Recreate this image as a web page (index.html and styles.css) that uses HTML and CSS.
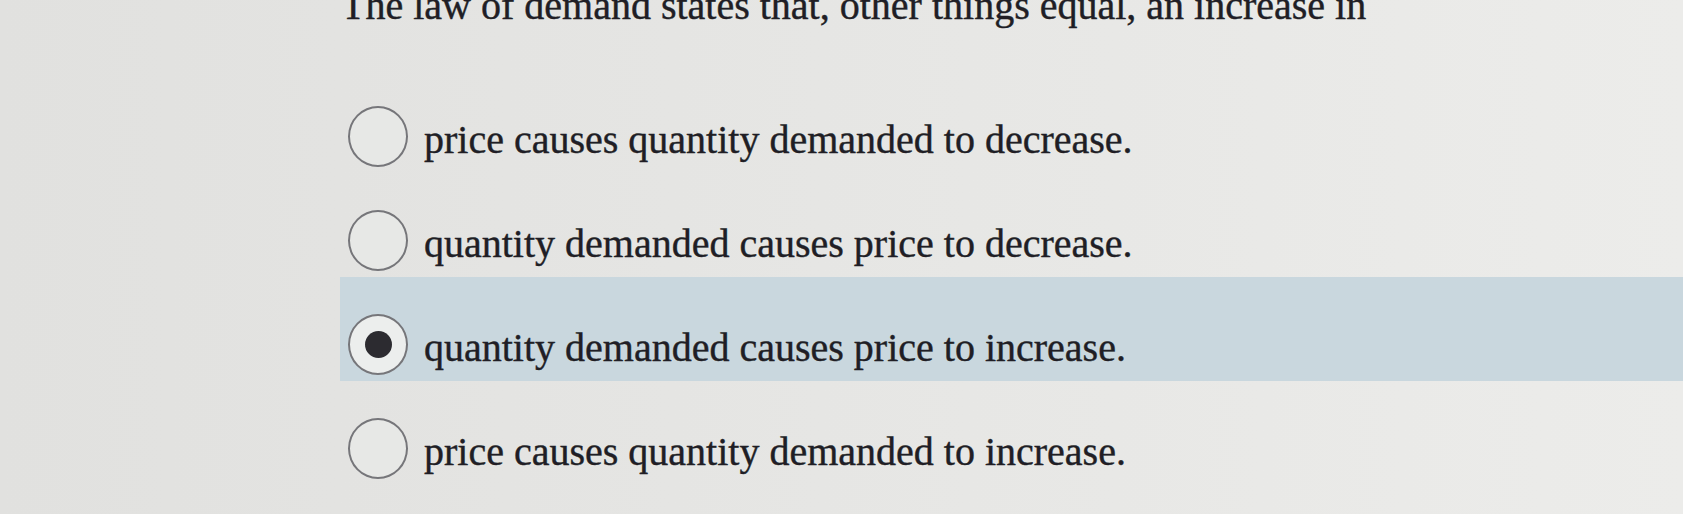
FILE: index.html
```html
<!DOCTYPE html>
<html lang="en">
<head>
<meta charset="utf-8">
<title>Law of demand</title>
<link rel="stylesheet" href="styles.css">
</head>
<body>
<main class="question">
  <p class="prompt">The law of demand states that, other things equal, an increase in</p>
  <ul class="options">
    <li class="option"><span class="radio"></span><span class="label">price causes quantity demanded to decrease.</span></li>
    <li class="option"><span class="radio"></span><span class="label">quantity demanded causes price to decrease.</span></li>
    <li class="option selected"><span class="radio"><span class="dot"></span></span><span class="label">quantity demanded causes price to increase.</span></li>
    <li class="option"><span class="radio"></span><span class="label">price causes quantity demanded to increase.</span></li>
  </ul>
</main>
</body>
</html>
```

FILE: styles.css
```css
html, body {
  margin: 0;
  padding: 0;
  height: 100%;
  overflow: hidden;
}
body {
  background: linear-gradient(90deg, #e1e1df 0%, #e5e5e3 40%, #e9e9e7 75%, #ececea 100%);
  font-family: "Liberation Serif", "Times New Roman", serif;
  color: #201e25;
}
.question {
  padding-left: 340px;
}
.prompt {
  margin: -14px 0 0 1px;
  font-size: 40px;
  line-height: 40px;
  white-space: nowrap;
  -webkit-text-stroke: 0.4px #201e25;
}
.options {
  list-style: none;
  margin: 43px 0 0 0;
  padding: 0;
}
.option {
  box-sizing: border-box;
  height: 104px;
  padding: 31px 0 0 8px;
  display: flex;
  align-items: center;
  gap: 16px;
}
.option.selected {
  background: #c9d7de;
}
.radio {
  box-sizing: border-box;
  width: 60px;
  height: 61px;
  border: 2px solid #76767a;
  border-radius: 50%;
  background: #e7e8e6;
  display: flex;
  align-items: center;
  justify-content: center;
  flex: none;
}
.selected .radio {
  background: #eceeed;
}
.dot {
  width: 27px;
  height: 27px;
  border-radius: 50%;
  background: #2c2b30;
}
.label {
  font-size: 40px;
  line-height: 40px;
  padding-top: 6px;
  white-space: nowrap;
  -webkit-text-stroke: 0.4px #201e25;
}
```
